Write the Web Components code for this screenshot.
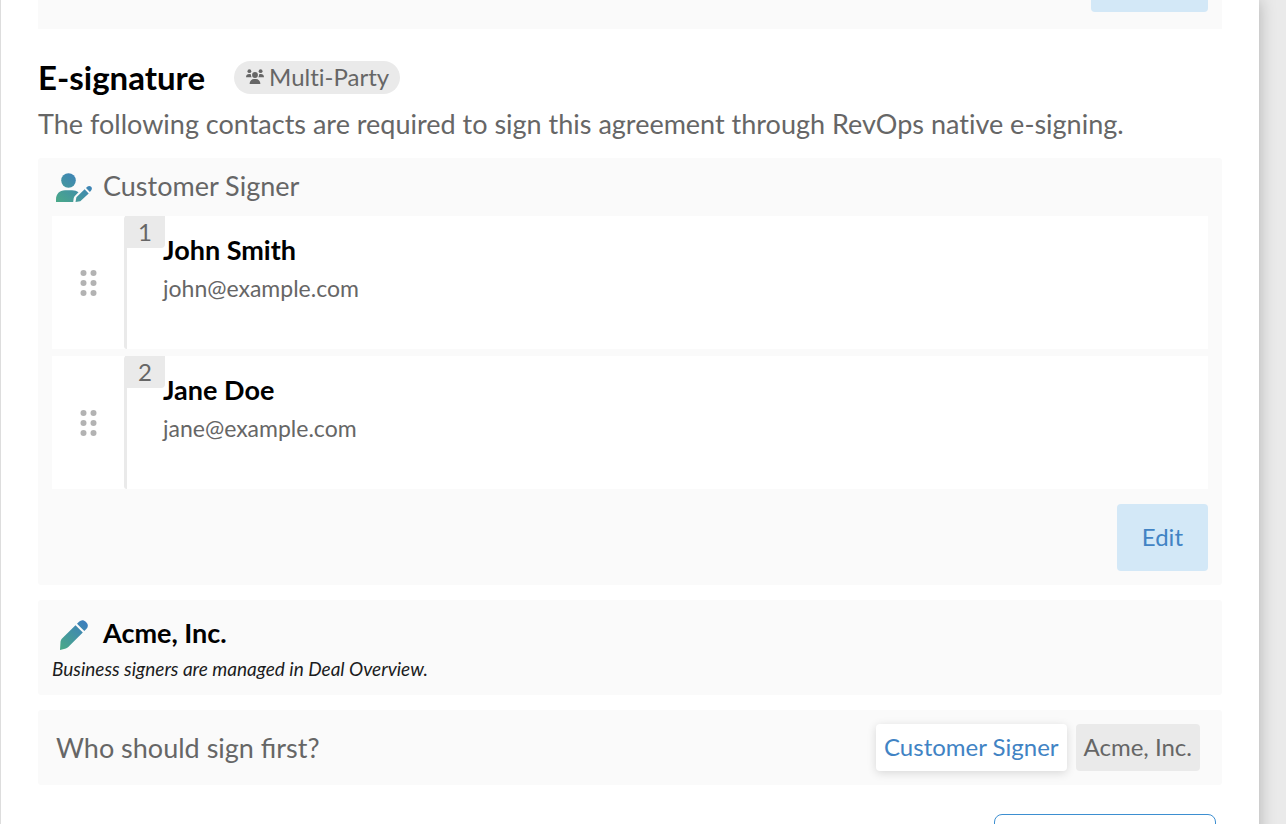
<!DOCTYPE html>
<html lang="en">
<head>
<meta charset="utf-8">
<title>E-signature</title>
<style>
  body {
    margin: 0;
    background: #eaeaea;
    font-family: Lato, "Liberation Sans", sans-serif;
    color: #666;
  }
</style>
</head>
<body>
<agreement-page>
  <panel-card slot="previous" class="tail"><action-button size="tail" label="Edit previous section"></action-button></panel-card>
  <section-heading tag="Multi-Party">
    E-signature
    <span slot="description">The following contacts are required to sign this agreement through RevOps native e-signing.</span>
  </section-heading>
  <signer-list heading="Customer Signer">
    <signer-row order="1" name="John Smith" email="john@example.com"></signer-row>
    <signer-row order="2" name="Jane Doe" email="jane@example.com"></signer-row>
    <action-button slot="actions">Edit</action-button>
  </signer-list>
  <business-signer name="Acme, Inc.">Business signers are managed in Deal Overview.</business-signer>
  <sign-order question="Who should sign first?" options="Customer Signer|Acme, Inc." selected="0"></sign-order>
  <action-button slot="footer" size="outline" label="Continue"></action-button>
</agreement-page>

<script>
const gradient = (id, x1, y1, x2, y2) => `
  <linearGradient id="${id}" gradientUnits="userSpaceOnUse" x1="${x1}" y1="${y1}" x2="${x2}" y2="${y2}">
    <stop offset="0" stop-color="#4aa88a"/>
    <stop offset="1" stop-color="#3c7fbb"/>
  </linearGradient>`;

class AgreementPage extends HTMLElement {
  constructor() {
    super();
    this.attachShadow({ mode: 'open' });
    this.shadowRoot.innerHTML = `
      <style>
      :host {
        display: block;
        height: 100vh;
        overflow: hidden;
      }

      main {
        box-sizing: border-box;
        min-height: 100vh;
        margin-right: 27px;
        padding: 0 37px;
        border-left: 1px solid #ddd;
        background: #fff;
        box-shadow: 0 0 16px rgba(0, 0, 0, 0.25);
      }

      .sections {
        display: flex;
        flex-direction: column;
        gap: 15px;
        padding-top: 31px;
      }

      footer {
        display: flex;
        justify-content: flex-end;
        padding: 29px 6px 0 0;
      }
      </style>
      <main>
        <slot name="previous"></slot>
        <div class="sections"><slot></slot></div>
        <footer><slot name="footer"></slot></footer>
      </main>
    `;
  }
}

class PanelCard extends HTMLElement {
  constructor() {
    super();
    this.attachShadow({ mode: 'open' });
    this.shadowRoot.innerHTML = `
      <style>
      :host {
        display: block;
        padding: 14px;
        border-radius: 3px;
        background: #fafafa;
      }

      :host(.tail) {
        display: flex;
        justify-content: flex-end;
        padding: 0 14px 17px;
        border-radius: 0;
      }
      </style>
      <slot></slot>
    `;
  }
}

class ActionButton extends HTMLElement {
  constructor() {
    super();
    this.attachShadow({ mode: 'open' });
  }

  connectedCallback() {
    const label = this.getAttribute('label');
    this.shadowRoot.innerHTML = `
      <style>
      :host {
        display: block;
      }

      button {
        display: block;
        padding: 18px 25px 20px;
        border: 0;
        border-radius: 4px;
        background: #d3e8f7;
        color: #4183c4;
        font: 24px/29px Lato, "Liberation Sans", sans-serif;
        cursor: pointer;
      }

      :host([size="tail"]) button {
        width: 117px;
        height: 12px;
        padding: 0;
        border-radius: 0 0 4px 4px;
      }

      :host([size="outline"]) button {
        width: 222px;
        height: 60px;
        border: 1px solid #3d8fd1;
        border-radius: 8px;
        background: #fff;
      }
      </style>
      <button type="button"${label ? ` aria-label="${label}"` : ''}><slot></slot></button>
    `;
  }
}

class SectionHeading extends HTMLElement {
  constructor() {
    super();
    this.attachShadow({ mode: 'open' });
  }

  connectedCallback() {
    this.shadowRoot.innerHTML = `
      <style>
      :host {
        display: block;
        font-variant-ligatures: none;
      }

      header {
        display: flex;
        align-items: center;
        gap: 29px;
      }

      h2 {
        margin: 0;
        color: #000;
        font-size: 33px;
        line-height: 34px;
      }

      .tag {
        display: flex;
        align-items: center;
        gap: 5px;
        padding: 0 11px 2px 12px;
        border-radius: 17px;
        background: #eaeaea;
        font-size: 24px;
        line-height: 31px;
      }

      p {
        margin: 0;
        padding: 12px 0 1px;
        font-size: 27px;
        line-height: 36px;
      }
      </style>
      <header>
        <h2><slot></slot></h2>
        <span class="tag">
          <svg width="18" height="16" viewBox="0 0 18 16" fill="#666" aria-hidden="true">
            <circle cx="3.4" cy="3.2" r="1.9"/>
            <circle cx="14.6" cy="3.2" r="1.9"/>
            <circle cx="9" cy="7" r="2.9"/>
            <path d="M0 9.200C0 7.200 1.400 6 3.200 6c.7 0 1.300.1 1.800.4-.1 1.200.1 2.100.7 2.800zM18 9.200C18 7.200 16.600 6 14.800 6c-.7 0-1.300.1-1.800.4.1 1.200-.1 2.100-.7 2.800zM3.600 16c0-3 1.900-5 4.600-5h1.600c2.700 0 4.600 2 4.600 5z"/>
          </svg>
          ${this.getAttribute('tag')}
        </span>
      </header>
      <p><slot name="description"></slot></p>
    `;
  }
}

class SignerList extends HTMLElement {
  constructor() {
    super();
    this.attachShadow({ mode: 'open' });
  }

  connectedCallback() {
    this.shadowRoot.innerHTML = `
      <style>
      :host {
        display: block;
      }

      panel-card {
        padding-top: 0;
      }

      h3 {
        display: flex;
        align-items: center;
        gap: 11px;
        margin: 0;
        padding: 0 0 2px 4px;
        font-size: 27px;
        font-weight: 400;
        line-height: 56px;
      }

      .rows {
        display: flex;
        flex-direction: column;
        gap: 7px;
      }

      .actions {
        display: flex;
        justify-content: flex-end;
        padding-top: 15px;
      }
      </style>
      <panel-card>
        <h3>
          <svg width="36" height="32" viewBox="0 -3 36 32" fill="url(#g)" aria-hidden="true">
            <defs>${gradient('g', 4, 30, 26, 2)}</defs>
            <circle cx="12.500" cy="7.500" r="7.300"/>
            <path d="M0 29v-2.500C0 21 3.500 17.200 9 17.200h7c2.700 0 4.900.7 6.500 2.100L18.600 23.300c-.6.700-.9 1.500-1 2.400L17.200 29z"/>
            <path d="M19.500 29l.9-4.700 8.200-8 4.100 4.100-8.400 7.900zM30 15.100l1.200-1.300c1.300-1.200 2.900-1.100 3.900-.1s1.100 2.600 0 3.900l-1.200 1.300z"/>
          </svg>
          ${this.getAttribute('heading')}
        </h3>
        <div class="rows"><slot></slot></div>
        <div class="actions"><slot name="actions"></slot></div>
      </panel-card>
    `;
  }
}

class SignerRow extends HTMLElement {
  constructor() {
    super();
    this.attachShadow({ mode: 'open' });
  }

  connectedCallback() {
    this.shadowRoot.innerHTML = `
      <style>
      :host {
        display: flex;
        background: #fff;
      }

      .handle {
        display: flex;
        align-items: center;
        justify-content: center;
        width: 72px;
        padding: 0;
        border: 0;
        background: none;
        cursor: grab;
      }

      .signer {
        position: relative;
        flex: 1;
        padding: 15px 0 42px 36px;
        border-left: 3px solid #eaeaea;
        border-radius: 3px;
      }

      .order {
        position: absolute;
        top: 0;
        left: -2px;
        width: 40px;
        border-radius: 0 0 4px 0;
        background: #eaeaea;
        font-size: 24px;
        line-height: 32px;
        text-align: center;
      }

      .name {
        position: relative;
        color: #000;
        font-size: 27px;
        font-weight: 700;
        line-height: 38px;
      }

      .email {
        font-size: 23px;
        line-height: 38px;
      }
      </style>
      <button class="handle" type="button" aria-label="Reorder signer">
        <svg width="18" height="28" viewBox="0 0 18 28" fill="#b3b3b3">
          <circle cx="4.500" cy="4" r="3"/><circle cx="14.500" cy="4" r="3"/>
          <circle cx="4.500" cy="14" r="3"/><circle cx="14.500" cy="14" r="3"/>
          <circle cx="4.500" cy="24" r="3"/><circle cx="14.500" cy="24" r="3"/>
        </svg>
      </button>
      <div class="signer">
        <span class="order">${this.getAttribute('order')}</span>
        <div class="name">${this.getAttribute('name')}</div>
        <div class="email">${this.getAttribute('email')}</div>
      </div>
    `;
  }
}

class BusinessSigner extends HTMLElement {
  constructor() {
    super();
    this.attachShadow({ mode: 'open' });
  }

  connectedCallback() {
    this.shadowRoot.innerHTML = `
      <style>
      :host {
        display: block;
      }

      h3 {
        display: flex;
        align-items: center;
        gap: 15px;
        margin: 0;
        padding: 0 0 4px 8px;
        color: #000;
        font-size: 27px;
        line-height: 38px;
      }

      p {
        margin: 0;
        color: #1b1c1d;
        font-size: 19px;
        font-style: italic;
        line-height: 25px;
      }
      </style>
      <panel-card>
        <h3>
          <svg width="28" height="34" viewBox="0 -4 28 34" fill="url(#g)" aria-hidden="true">
            <defs>${gradient('g', 2, 28, 25, 3)}</defs>
            <path d="M0 30L.5 22c.1-1.500.8-2.700 1.800-3.700L15.500 5.300l7.300 7.300L10 25.200c-1.500 1.500-3.100 3.300-5 3.600z"/>
            <path d="M17 3.800l2-2c2.300-2.200 4.700-2 7 .3s2.500 4.700.3 7l-2 2z"/>
          </svg>
          ${this.getAttribute('name')}
        </h3>
        <p><slot></slot></p>
      </panel-card>
    `;
  }
}

class SignOrder extends HTMLElement {
  constructor() {
    super();
    this.attachShadow({ mode: 'open' });
  }

  connectedCallback() {
    const options = this.getAttribute('options').split('|');
    const selected = Number(this.getAttribute('selected'));
    this.shadowRoot.innerHTML = `
      <style>
      :host {
        display: block;
      }

      .row {
        display: flex;
        align-items: center;
        justify-content: space-between;
        padding: 0 8px 0 4px;
        font-size: 27px;
      }

      .options {
        display: flex;
        gap: 9px;
      }

      button {
        padding: 8px 8px 10px;
        border: 0;
        border-radius: 4px;
        background: #eaeaea;
        color: #666;
        font: 24px/29px Lato, "Liberation Sans", sans-serif;
        cursor: pointer;
      }

      button[aria-pressed="true"] {
        background: #fff;
        color: #4183c4;
        box-shadow: 0 2px 10px rgba(0, 0, 0, 0.14);
      }
      </style>
      <panel-card>
        <div class="row">
          <span id="question">${this.getAttribute('question')}</span>
          <div class="options" role="group" aria-labelledby="question">
            ${options.map((text, i) => `<button type="button" aria-pressed="${i === selected}">${text}</button>`).join('')}
          </div>
        </div>
      </panel-card>
    `;

    const buttons = this.shadowRoot.querySelectorAll('button');
    buttons.forEach((button) => {
      button.addEventListener('click', () => {
        buttons.forEach((other) => other.setAttribute('aria-pressed', other === button));
      });
    });
  }
}

customElements.define('agreement-page', AgreementPage);
customElements.define('panel-card', PanelCard);
customElements.define('action-button', ActionButton);
customElements.define('section-heading', SectionHeading);
customElements.define('signer-list', SignerList);
customElements.define('signer-row', SignerRow);
customElements.define('business-signer', BusinessSigner);
customElements.define('sign-order', SignOrder);
</script>
</body>
</html>
